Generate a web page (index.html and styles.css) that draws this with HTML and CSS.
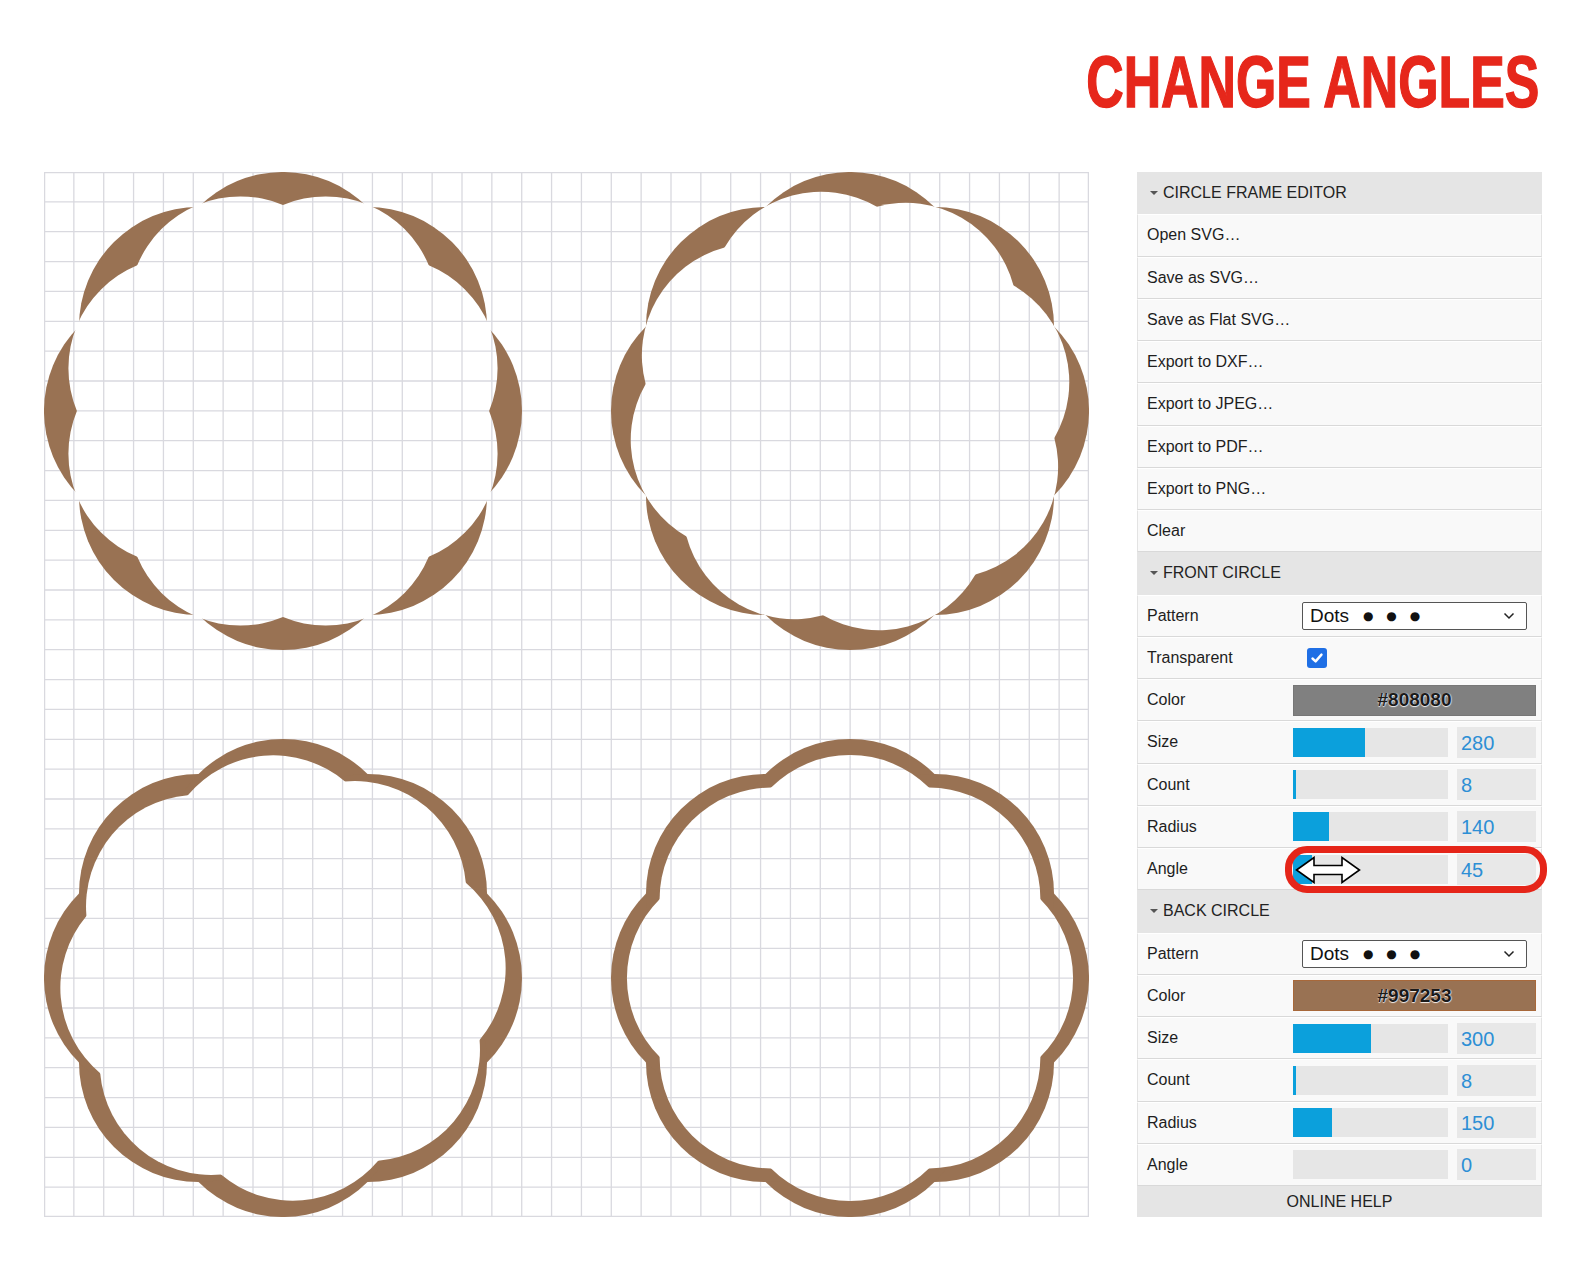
FILE: index.html
```html
<!DOCTYPE html>
<html lang="en">
<head>
<meta charset="utf-8">
<title>Circle Frame Editor</title>
<link rel="stylesheet" href="styles.css">
</head>
<body>
<div class="page">
  <h1 class="title"><span>CHANGE ANGLES</span></h1>
  <div class="main">
    <div class="board">
      <svg viewBox="0 0 1045 1045" width="1045" height="1045">
        <defs>
          <g id="back">
            <circle cx="150" cy="0" r="150"/>
            <circle cx="106.066" cy="106.066" r="150"/>
            <circle cx="0" cy="150" r="150"/>
            <circle cx="-106.066" cy="106.066" r="150"/>
            <circle cx="-150" cy="0" r="150"/>
            <circle cx="-106.066" cy="-106.066" r="150"/>
            <circle cx="0" cy="-150" r="150"/>
            <circle cx="106.066" cy="-106.066" r="150"/>
          </g>
          <g id="front">
            <circle cx="140" cy="0" r="140"/>
            <circle cx="98.995" cy="98.995" r="140"/>
            <circle cx="0" cy="140" r="140"/>
            <circle cx="-98.995" cy="98.995" r="140"/>
            <circle cx="-140" cy="0" r="140"/>
            <circle cx="-98.995" cy="-98.995" r="140"/>
            <circle cx="0" cy="-140" r="140"/>
            <circle cx="98.995" cy="-98.995" r="140"/>
          </g>
          <mask id="cut-a" maskUnits="userSpaceOnUse" x="-320" y="-320" width="640" height="640">
            <rect x="-320" y="-320" width="640" height="640" fill="#fff"/>
            <use href="#front" fill="#000" transform="rotate(22.5)"/>
          </mask>
          <mask id="cut-b" maskUnits="userSpaceOnUse" x="-320" y="-320" width="640" height="640">
            <rect x="-320" y="-320" width="640" height="640" fill="#fff"/>
            <use href="#front" fill="#000" transform="rotate(30)"/>
          </mask>
          <mask id="cut-c" maskUnits="userSpaceOnUse" x="-320" y="-320" width="640" height="640">
            <rect x="-320" y="-320" width="640" height="640" fill="#fff"/>
            <use href="#front" fill="#000" transform="rotate(40)"/>
          </mask>
          <mask id="cut-d" maskUnits="userSpaceOnUse" x="-320" y="-320" width="640" height="640">
            <rect x="-320" y="-320" width="640" height="640" fill="#fff"/>
            <use href="#front" fill="#000" transform="rotate(45)"/>
          </mask>
        </defs>
        <rect width="1045" height="1045" fill="#fff"/>
        <!-- 35 x 35 cell grid -->
        <g transform="scale(29.857)">
          <path class="grid" d="M0.02 0V35M1 0V35M2 0V35M3 0V35M4 0V35M5 0V35M6 0V35M7 0V35M8 0V35M9 0V35M10 0V35M11 0V35M12 0V35M13 0V35M14 0V35M15 0V35M16 0V35M17 0V35M18 0V35M19 0V35M20 0V35M21 0V35M22 0V35M23 0V35M24 0V35M25 0V35M26 0V35M27 0V35M28 0V35M29 0V35M30 0V35M31 0V35M32 0V35M33 0V35M34 0V35M34.98 0V35M0 0.02H35M0 1H35M0 2H35M0 3H35M0 4H35M0 5H35M0 6H35M0 7H35M0 8H35M0 9H35M0 10H35M0 11H35M0 12H35M0 13H35M0 14H35M0 15H35M0 16H35M0 17H35M0 18H35M0 19H35M0 20H35M0 21H35M0 22H35M0 23H35M0 24H35M0 25H35M0 26H35M0 27H35M0 28H35M0 29H35M0 30H35M0 31H35M0 32H35M0 33H35M0 34H35M0 34.98H35"/>
        </g>
        <!-- frames: back dots minus front dots at four front angles -->
        <g transform="translate(239 239) scale(0.7967)">
          <use href="#back" class="frame" mask="url(#cut-a)"/>
        </g>
        <g transform="translate(806 239) scale(0.7967)">
          <use href="#back" class="frame" mask="url(#cut-b)"/>
        </g>
        <g transform="translate(239 806) scale(0.7967)">
          <use href="#back" class="frame" mask="url(#cut-c)"/>
        </g>
        <g transform="translate(806 806) scale(0.7967)">
          <use href="#back" class="frame" mask="url(#cut-d)"/>
        </g>
      </svg>
    </div>

    <div class="gui">
      <div class="hdr"><i class="caret"></i>CIRCLE FRAME EDITOR</div>
      <div class="item">Open SVG…</div>
      <div class="item">Save as SVG…</div>
      <div class="item">Save as Flat SVG…</div>
      <div class="item">Export to DXF…</div>
      <div class="item">Export to JPEG…</div>
      <div class="item">Export to PDF…</div>
      <div class="item">Export to PNG…</div>
      <div class="item">Clear</div>

      <div class="hdr"><i class="caret"></i>FRONT CIRCLE</div>
      <div class="item prop">
        <span>Pattern</span>
        <div class="ctl"><div class="select">Dots <span class="dots">● ● ●</span>
          <svg class="chev" width="12" height="8" viewBox="0 0 12 8"><path d="M1.5 1.5L6 6L10.5 1.5"/></svg></div></div>
      </div>
      <div class="item prop">
        <span>Transparent</span>
        <div class="ctl"><span class="check"><svg width="14" height="14" viewBox="0 0 14 14"><path d="M2.5 7.5L5.6 10.4L11.5 3.6"/></svg></span></div>
      </div>
      <div class="item prop">
        <span>Color</span>
        <div class="ctl"><div class="swatch gray">#808080</div></div>
      </div>
      <div class="item prop">
        <span>Size</span>
        <div class="ctl"><div class="track"><div class="fill" style="width:46.7%"></div></div><div class="val">280</div></div>
      </div>
      <div class="item prop">
        <span>Count</span>
        <div class="ctl"><div class="track"><div class="fill" style="width:2%"></div></div><div class="val">8</div></div>
      </div>
      <div class="item prop">
        <span>Radius</span>
        <div class="ctl"><div class="track"><div class="fill" style="width:23.3%"></div></div><div class="val">140</div></div>
      </div>
      <div class="item prop angle">
        <span>Angle</span>
        <div class="ctl"><div class="track"><div class="fill" style="width:12.5%"></div></div><div class="val">45</div></div>
        <span class="ring"></span>
        <svg class="cursor" width="66" height="28" viewBox="0 0 66 28"><path d="M1.5 14L19 1.5V9.5H47V1.5L64.5 14L47 26.5V18.5H19V26.5Z"/></svg>
      </div>

      <div class="hdr"><i class="caret"></i>BACK CIRCLE</div>
      <div class="item prop">
        <span>Pattern</span>
        <div class="ctl"><div class="select">Dots <span class="dots">● ● ●</span>
          <svg class="chev" width="12" height="8" viewBox="0 0 12 8"><path d="M1.5 1.5L6 6L10.5 1.5"/></svg></div></div>
      </div>
      <div class="item prop">
        <span>Color</span>
        <div class="ctl"><div class="swatch brown">#997253</div></div>
      </div>
      <div class="item prop">
        <span>Size</span>
        <div class="ctl"><div class="track"><div class="fill" style="width:50%"></div></div><div class="val">300</div></div>
      </div>
      <div class="item prop">
        <span>Count</span>
        <div class="ctl"><div class="track"><div class="fill" style="width:2%"></div></div><div class="val">8</div></div>
      </div>
      <div class="item prop">
        <span>Radius</span>
        <div class="ctl"><div class="track"><div class="fill" style="width:25%"></div></div><div class="val">150</div></div>
      </div>
      <div class="item prop">
        <span>Angle</span>
        <div class="ctl"><div class="track"><div class="fill" style="width:0%"></div></div><div class="val">0</div></div>
      </div>

      <div class="help">ONLINE HELP</div>
    </div>
  </div>
</div>
</body>
</html>
```

FILE: styles.css
```css
html, body {
  margin: 0;
  background: #fff;
}

body {
  font-family: "Liberation Sans", Arial, sans-serif;
  color: #1e1e1e;
}

.page {
  width: 1588px;
  box-sizing: border-box;
  padding: 45px 0 0 44px;
}

.title {
  margin: 0;
  width: 1497px;
  height: 74px;
  text-align: right;
  font: bold 72px/74px "Liberation Sans", sans-serif;
  color: #e6271b;
}

.title span {
  display: inline-block;
  margin-right: 2px;
  -webkit-text-stroke: 1.4px #e6271b;
  transform: scaleX(0.72);
  transform-origin: right center;
}

.main {
  display: flex;
  align-items: flex-start;
  gap: 48px;
  margin-top: 53px;
}

/* drawing board */
.board {
  width: 1045px;
  height: 1045px;
  flex: none;
}

.board svg {
  display: block;
}

.grid {
  fill: none;
  stroke: #d9d9df;
  stroke-width: 1.3;
  vector-effect: non-scaling-stroke;
}

.frame {
  fill: #997253;
}

/* control panel */
.gui {
  width: 405px;
  height: 1045px;
  flex: none;
  display: grid;
  grid-template-rows: repeat(24, 1fr) 31px;
  font-size: 16px;
}

.hdr {
  background: #e5e5e5;
  display: flex;
  align-items: center;
  padding-left: 13px;
  color: #222;
}

.caret {
  width: 0;
  height: 0;
  border-left: 4px solid transparent;
  border-right: 4px solid transparent;
  border-top: 4.5px solid #555;
  margin-right: 5px;
}

.item {
  background: #f9f9f9;
  border: 1px solid #e3e3e3;
  border-top-color: #fff;
  border-bottom-color: #d9d9d9;
  display: flex;
  align-items: center;
  padding: 0 5px 0 9px;
  min-height: 0;
}

.prop {
  display: grid;
  grid-template-columns: 146px 1fr;
  align-items: center;
}

.ctl {
  display: flex;
  align-items: center;
  gap: 9px;
  height: 100%;
}

.track {
  width: 155px;
  height: 29px;
  flex: none;
  background: #e6e6e6;
}

.fill {
  height: 100%;
  background: #0ba0dc;
}

.val {
  flex: 1;
  height: 31px;
  box-sizing: border-box;
  padding: 2px 0 0 4px;
  background: #e8e8e8;
  color: #2d8fd5;
  font-size: 20px;
  display: flex;
  align-items: center;
}

.select {
  position: relative;
  margin-left: 9px;
  width: 225px;
  height: 28px;
  box-sizing: border-box;
  border: 1px solid #555;
  border-radius: 2px;
  background: #fff;
  display: flex;
  align-items: center;
  padding-left: 7px;
  font-size: 19px;
  color: #111;
}

.dots {
  margin-left: 14px;
  font-family: "DejaVu Sans", sans-serif;
  font-size: 12px;
  word-spacing: 9px;
}

.chev {
  position: absolute;
  right: 11px;
  top: 9px;
}

.chev path {
  fill: none;
  stroke: #222;
  stroke-width: 1.5;
}

.check {
  margin-left: 14px;
  width: 20px;
  height: 20px;
  border-radius: 3px;
  background: #1f6fe5;
  display: flex;
  align-items: center;
  justify-content: center;
}

.check path {
  fill: none;
  stroke: #fff;
  stroke-width: 2.4;
  stroke-linecap: round;
  stroke-linejoin: round;
}

.swatch {
  flex: 1;
  height: 31px;
  box-sizing: border-box;
  display: flex;
  align-items: center;
  justify-content: center;
  font-weight: bold;
  font-size: 19px;
  color: #1a1a1a;
  text-shadow: 0 1px 1px rgba(255, 255, 255, 0.9), 1px 0 1px rgba(255, 255, 255, 0.6);
}

.swatch.gray {
  background: #808080;
  border: 1px solid #777;
}

.swatch.brown {
  background: #997253;
  border: 1px solid #a8683a;
}

/* highlighted angle row */
.angle {
  position: relative;
}

.ring {
  position: absolute;
  left: 147px;
  top: -3px;
  width: 262px;
  height: 47px;
  box-sizing: border-box;
  border: 7px solid #e52519;
  border-radius: 22px;
}

.cursor {
  position: absolute;
  left: 157px;
  top: 7px;
}

.cursor path {
  fill: #fff;
  stroke: #000;
  stroke-width: 1.6;
  stroke-linejoin: miter;
}

.help {
  background: #e5e5e5;
  display: flex;
  align-items: center;
  justify-content: center;
  color: #222;
}
```
